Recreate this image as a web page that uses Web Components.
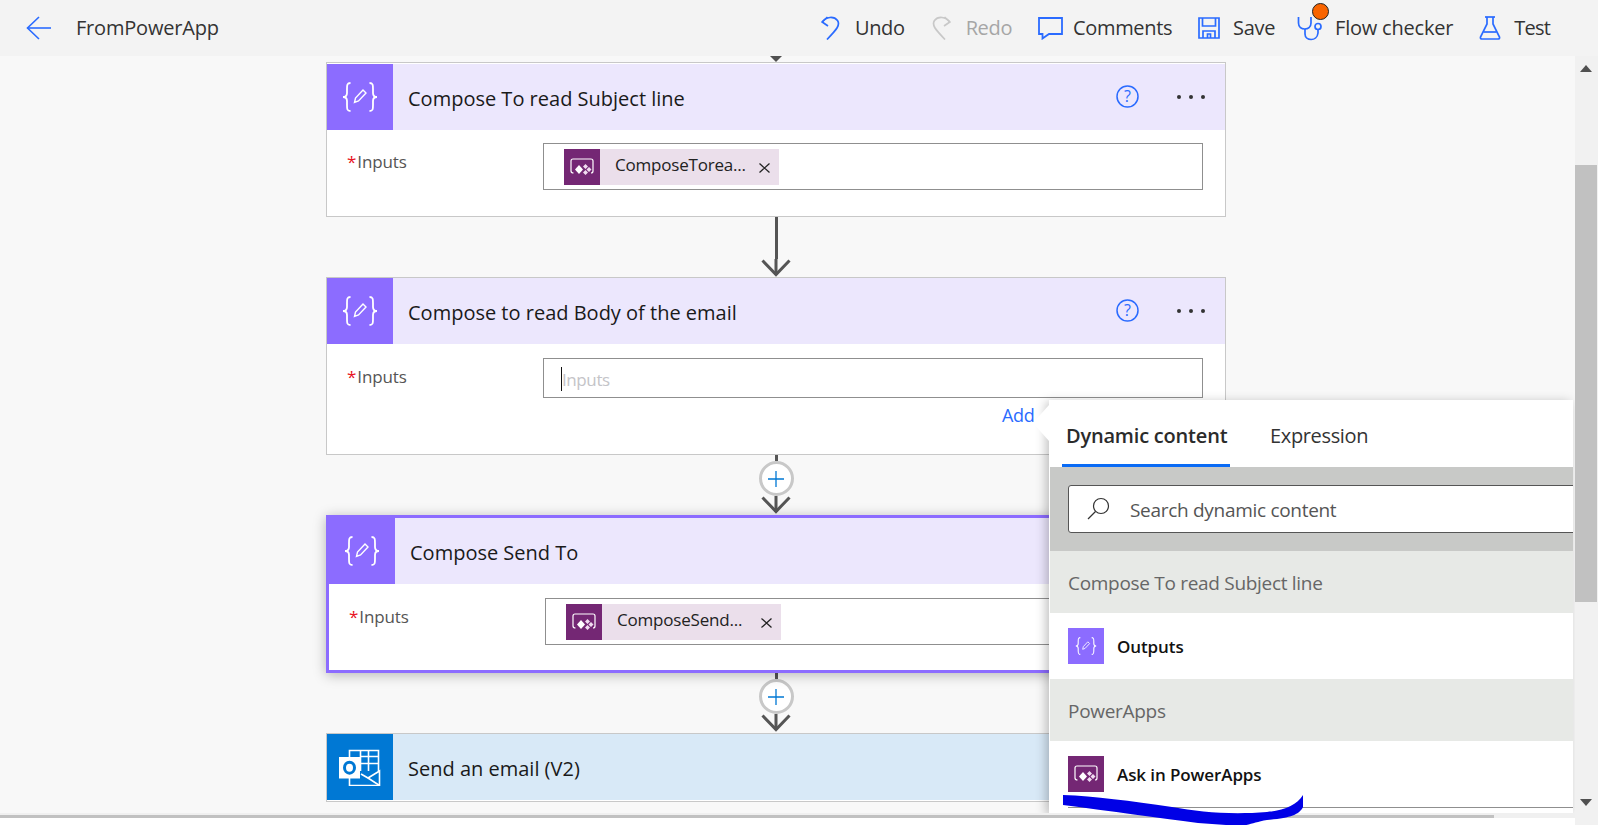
<!DOCTYPE html>
<html lang="en">
<head>
<meta charset="utf-8">
<title>FromPowerApp</title>
<style>
html, body { margin: 0; height: 100%; overflow: hidden; }
body { font-family: "Open Sans", "Noto Sans", sans-serif; color: #222; }
</style>
</head>
<body>
<flow-app>
	<tool-btn slot="tools" icon="undo" style="margin-right:27px">Undo</tool-btn>
	<tool-btn slot="tools" icon="redo" disabled style="margin-right:26px">Redo</tool-btn>
	<tool-btn slot="tools" icon="comment" style="margin-right:26px;--gap:10px">Comments</tool-btn>
	<tool-btn slot="tools" icon="save" style="margin-right:22px;--gap:13px">Save</tool-btn>
	<tool-btn slot="tools" icon="checker" style="margin-right:26px;--gap:11px;letter-spacing:-.2px">Flow checker</tool-btn>
	<tool-btn slot="tools" icon="test" style="--gap:13px;letter-spacing:-.8px">Test</tool-btn>

	<flow-link kind="head"></flow-link>
	<flow-card heading="Compose To read Subject line" style="height:155px;padding-top:1px">
		<flow-field><flow-token>ComposeTorea...</flow-token></flow-field>
	</flow-card>
	<flow-link kind="arrow"></flow-link>
	<flow-card heading="Compose to read Body of the email" style="height:178px">
		<flow-field tall placeholder="Inputs"></flow-field>
		<a style="position:absolute;left:675px;top:125px;color:#2a6bff;font-size:18px;letter-spacing:-.3px">Add</a>
	</flow-card>
	<flow-link kind="plus"></flow-link>
	<flow-card heading="Compose Send To" selected style="height:158px">
		<flow-field style="margin-top:1px"><flow-token>ComposeSend...</flow-token></flow-field>
	</flow-card>
	<flow-link kind="plus"></flow-link>
	<flow-card heading="Send an email (V2)" type="outlook" style="height:69px"></flow-card>

	<dyn-panel slot="overlay"></dyn-panel>
</flow-app>

<script>
const ICONS = {
	undo: `<svg width="19" height="24" viewBox="0 0 19 24" fill="none" stroke="currentColor" stroke-width="1.7"><path d="M6.500 1 L1.200 6 L7 10"/><path d="M1.200 6 C5 .5 13 0 16.500 4.500 C19.500 9 16 13 6 23.500"/></svg>`,
	redo: `<svg width="19" height="24" viewBox="0 0 19 24" fill="none" stroke="currentColor" stroke-width="1.7"><path d="M12.500 1 L17.800 6 L12 10"/><path d="M17.800 6 C14 .5 6 0 2.500 4.500 C-.5 9 3 13 13 23.500"/></svg>`,
	comment: `<svg width="25" height="23" viewBox="0 0 25 23" fill="none" stroke="currentColor" stroke-width="1.8"><path d="M1 1 H24 V17 H11 L4.500 21.500 V17 H1 Z"/></svg>`,
	save: `<svg width="22" height="22" viewBox="0 0 22 22" fill="none" stroke="currentColor" stroke-width="1.7"><path d="M1 1 H21 V21 H1 Z"/><path d="M4.500 1 V9 H17.500 V1"/><path d="M5 21 V14 H17 V21"/><path d="M9.500 21 V17 H12.500 V21"/></svg>`,
	checker: `<svg width="27" height="25" viewBox="0 0 27 25" fill="none" stroke="currentColor" stroke-width="1.7"><path d="M1.500 1 V7 C1.500 15 14 15 14 7 V1"/><path d="M8 13 V18 C8 25 20 26 21 17 V14"/><circle cx="21" cy="10.500" r="3"/></svg>`,
	test: `<svg width="22" height="24" viewBox="0 0 22 24" fill="none" stroke="currentColor" stroke-width="1.7"><path d="M6 1 H16"/><path d="M8 1 V8 L1.500 21 Q1 23 3 23 H19 Q21 23 20.500 21 L14 8 V1"/><path d="M4.500 16 H17.500"/></svg>`,
	compose: `<svg width="36" height="30" viewBox="0 0 36 30" fill="none" stroke="#fff" stroke-width="1.800"><path d="M8.500 1 C5 1 5 3 5 7 V11 C5 13 4 15 1 15 C4 15 5 17 5 19 V23 C5 27 5 29 8.500 29"/><path d="M27.500 1 C31 1 31 3 31 7 V11 C31 13 32 15 35 15 C32 15 31 17 31 19 V23 C31 27 31 29 27.500 29"/><path d="M12.500 20.500 L13.500 16 L21 8 L24 11 L16.500 19 Z" stroke-width="1.400"/></svg>`,
	powerapps: `<svg width="36" height="36" viewBox="0 0 36 36"><path d="M9.500 24 Q7 24 7 22 V12 Q7 10 9 10 H27 Q29 10 29 12 V22 Q29 24 27 24" fill="none" stroke="#fff" stroke-width="1.200"/><path d="M15 16 L19 20.500 L15 25 L11 20.500 Z" fill="#fff"/><path d="M21.500 15 L24 17.500 L21.500 20 L19 17.500 Z M21.500 21 L24 23.500 L21.500 26 L19 23.500 Z M25 18 L27.500 20.500 L25 23 L22.500 20.500 Z" fill="#f1dcf1"/></svg>`,
	outlook: `<svg width="43" height="37" viewBox="0 0 43 37" fill="none" stroke="#fff" stroke-width="1.600"><path d="M10.500 8 V1.500 H39.500 V22 M21.500 1.500 V22 M29.500 1.500 V22 M21.500 7.500 H39.500 M21.500 14.500 H39.500"/><path d="M10.500 29 V36.500 H40.500 V22 L29 29 L22 25"/><path d="M29 29 L40.500 36.500"/><path d="M0 8 H21 V29.500 H0 Z" fill="#fff" stroke="none"/><ellipse cx="10.500" cy="18.700" rx="5" ry="5.500" stroke="#0078d4" stroke-width="3"/></svg>`
};

function shadow(host, html) {
	host.attachShadow({mode: "open"}).innerHTML = html;
}

class FlowApp extends HTMLElement {
	constructor() {
		super();
		shadow(this, `
<style>
:host { display: grid; grid-template-columns: 1575px 23px; grid-template-rows: 56px 757px 12px; width: 1598px; height: 825px; position: relative; overflow: hidden; background: #f8f8f8; }
header { grid-column: 1 / 3; grid-row: 1; background: #f3f3f3; display: flex; align-items: center; }
.back { margin-left: 26px; color: #2a6bff; display: flex; }
h1 { margin: 0 0 0 24px; font: 400 20px/1 "Open Sans", sans-serif; color: #333; flex: 1; letter-spacing: -.2px; }
.tools { display: flex; align-items: center; margin-right: 48px; }
main { grid-column: 1; grid-row: 2; position: relative; padding-left: 326px; overflow: hidden; display: flex; flex-direction: column; }
.vbar { grid-column: 2; grid-row: 2 / 4; background: #f1f1f1; display: flex; flex-direction: column; align-items: center; padding-top: 9px; }
.thumb { position: absolute; top: 165px; right: 1px; width: 22px; height: 437px; background: #c1c1c1; }
.up, .down { width: 0; border: 6px solid transparent; border-top: 0; border-bottom: 7px solid #505050; margin-left: -1px; }
.down { margin-top: auto; margin-bottom: 19px; border-bottom: 0; border-top: 7px solid #505050; }
.hbar { grid-column: 1; grid-row: 3; background: linear-gradient(#f0f0f0 0 2px, #c1c1c1 2px 5px, #fff 5px); position: relative; }
.hbar::after { content: ""; position: absolute; left: 1494px; right: 0; top: 0; height: 5px; background: #f0f0f0; }
.scribble { position: absolute; left: 0; top: 0; pointer-events: none; }
</style>
<header>
	<span class="back"><svg width="26" height="24" viewBox="0 0 26 24" fill="none" stroke="currentColor" stroke-width="1.600"><path d="M13 1 L1.500 12 L13 23"/><path d="M1.500 12 H25"/></svg></span>
	<h1>FromPowerApp</h1>
	<div class="tools"><slot name="tools"></slot></div>
</header>
<main><slot></slot><slot name="overlay"></slot></main>
<div class="vbar"><span class="up"></span><span class="thumb"></span><span class="down"></span></div>
<div class="hbar"></div>
<svg class="scribble" width="1598" height="825"><path d="M1063 795 C1095 796 1130 801 1172 807 C1200 812 1230 815 1267 812 C1285 810 1297 805 1303 795 L1303 807 C1299 815 1290 818 1267 820 C1255 822 1250 825 1240 826 L1198 823 C1160 818 1110 811 1063 805 Z" fill="#0000e6"/></svg>`);
	}
}

class ToolBtn extends HTMLElement {
	constructor() {
		super();
		let disabled = this.hasAttribute("disabled");
		shadow(this, `
<style>
:host { display: inline-flex; align-items: center; gap: var(--gap, 15px); font: 400 20px/1 "Open Sans", sans-serif; letter-spacing: -.35px; color: ${disabled ? "#a6a6a6" : "#333"}; position: relative; }
.icon { color: ${disabled ? "#c8c8c8" : "#2a6bff"}; display: flex; }
.badge { position: absolute; left: 15px; top: -13px; width: 15px; height: 15px; border-radius: 50%; background: #f96400; border: 1px solid #222; }
</style>
<span class="icon">${ICONS[this.getAttribute("icon")]}</span>
${this.getAttribute("icon") == "checker" ? `<span class="badge"></span>` : ""}
<slot></slot>`);
	}
}

class FlowLink extends HTMLElement {
	constructor() {
		super();
		let kind = this.getAttribute("kind");
		let chevron = `<svg width="30" height="18" viewBox="0 0 30 18" fill="none" stroke="#555" stroke-width="3"><path d="M1.500 1.500 L15 15.500 L28.500 1.500"/><path d="M15 0 V16"/></svg>`;
		let body = "";
		if (kind == "head") {
			body = `<span class="tri"></span>`;
		} else if (kind == "arrow") {
			body = `<span class="line" style="height:42px"></span>${chevron}`;
		} else {
			body = `<span class="line" style="height:6px"></span>
			<span class="plus"><svg width="16" height="16" viewBox="0 0 16 16" stroke="#0078d4" stroke-width="1.300"><path d="M8 0 V16 M0 8 H16"/></svg></span>${chevron}`;
		}
		let height = {head: 6, arrow: 60, plus: 60}[kind];
		shadow(this, `
<style>
:host { display: flex; flex-direction: column; align-items: center; width: 900px; flex: none; height: ${height}px; }
.tri { border: 6px solid transparent; border-bottom: 0; border-top: 6px solid #505050; }
.line { width: 3px; background: #555; flex: none; }
.plus { width: 29px; height: 29px; border: 3px solid #c8c8c8; border-radius: 50%; background: #fff; display: flex; align-items: center; justify-content: center; flex: none; }
svg { display: block; flex: none; }
</style>
${body}`);
	}
}

class FlowCard extends HTMLElement {
	constructor() {
		super();
		let selected = this.hasAttribute("selected");
		let outlook = this.getAttribute("type") == "outlook";
		let heading = this.getAttribute("heading");
		shadow(this, `
<style>
:host { display: flex; flex-direction: column; width: 900px; box-sizing: border-box; flex: none; position: relative; background: #fff; border: ${selected ? "3px solid #8c6cff" : "1px solid #c8c8c8"}; ${selected ? "box-shadow: 0 2px 12px rgba(0,0,0,.28);" : ""} }
.head { display: flex; align-items: center; height: 66px; background: ${outlook ? "#d8e9f7" : "#ece7fd"}; flex: none; }
.icon { width: 66px; align-self: stretch; background: ${outlook ? "#0078d4" : "#8c6cff"}; display: flex; align-items: center; justify-content: center; flex: none; }
h2 { margin: 0 0 0 15px; padding-top: 4px; font: 400 20px/1 "Open Sans", sans-serif; color: #1a1a1a; flex: 1; }
.help { margin: -2px 38px 0 0; display: flex; }
.more { display: flex; gap: 8px; margin-right: 20px; }
.more i { width: 4px; height: 4px; border-radius: 50%; background: #333; }
.body { padding: 13px 22px 0 20px; }
</style>
<div class="head">
	<span class="icon">${outlook ? ICONS.outlook : ICONS.compose}</span>
	<h2>${heading}</h2>
	${outlook || selected ? "" : `<span class="help"><svg width="23" height="23" viewBox="0 0 23 23"><circle cx="11.500" cy="11.500" r="10.500" fill="none" stroke="#2a6bff" stroke-width="1.500"/><text x="11.500" y="17" text-anchor="middle" font-family="Open Sans" font-size="16" fill="#2a6bff">?</text></svg></span><span class="more"><i></i><i></i><i></i></span>`}
</div>
<div class="body"><slot></slot></div>`);
	}
}

class FlowField extends HTMLElement {
	constructor() {
		super();
		let placeholder = this.getAttribute("placeholder");
		let tall = this.hasAttribute("tall");
		shadow(this, `
<style>
:host { display: flex; align-items: flex-start; margin-top: ${tall ? 1 : 0}px; }
.label { width: 196px; flex: none; font: 400 17px/1 "Open Sans", sans-serif; color: #555; padding-top: 10px; letter-spacing: -.1px; display: flex; gap: 1px; }
.label b { font-weight: 400; color: #e81123; }
.box { width: 660px; height: ${tall ? 40 : 47}px; box-sizing: border-box; border: 1px solid #8f8f8f; display: flex; align-items: center; padding-left: ${tall ? 17 : 20}px; background: #fff; flex: none; }
.ph { font: 400 17px/1 "Open Sans", sans-serif; letter-spacing: -.4px; color: #c4c4c8; margin-top: 2px; border-left: 1px solid #111; padding: 3.500px 0; }
</style>
<span class="label"><b>*</b>Inputs</span>
<div class="box">${placeholder ? `<span class="ph">${placeholder}</span>` : `<slot></slot>`}</div>`);
	}
}

class FlowToken extends HTMLElement {
	constructor() {
		super();
		shadow(this, `
<style>
:host { display: inline-flex; align-items: center; height: 36px; width: 215px; background: #ebdfeb; font: 400 17px/1 "Open Sans", sans-serif; letter-spacing: -.2px; color: #222; }
.ic { width: 36px; height: 36px; background: #742774; flex: none; }
.tx { margin-left: 15px; flex: 1; white-space: nowrap; padding-bottom: 5px; }
.x { margin-right: 9px; margin-top: 2px; display: flex; }
</style>
<span class="ic">${ICONS.powerapps}</span>
<span class="tx"><slot></slot></span>
<span class="x"><svg width="11" height="10" viewBox="0 0 11 10" stroke="#222" stroke-width="1.300"><path d="M.500 .500 L10.500 9.500 M10.500 .500 L.500 9.500"/></svg></span>`);
	}
}

class DynPanel extends HTMLElement {
	constructor() {
		super();
		shadow(this, `
<style>
:host { position: absolute; left: 1049px; top: 344px; width: 524px; height: 413px; background: #fff; box-shadow: -3px 2px 10px rgba(0,0,0,.25); display: block; font-family: "Open Sans", sans-serif; }
.notch { position: absolute; left: -16px; top: 5px; width: 0; height: 0; border-style: solid; border-width: 18px 16px 18px 0; border-color: transparent #fff transparent transparent; }
.wrap { position: absolute; inset: 0; overflow: hidden; padding-left: 1px; display: flex; flex-direction: column; }
.tabs { display: flex; height: 67px; flex: none; padding-left: 12px; box-sizing: border-box; }
.tab { font-size: 20px; color: #333; letter-spacing: -.35px; padding: 22px 4px 0; box-sizing: border-box; height: 67px; white-space: nowrap; }
.tab.on { font-weight: 600; border-bottom: 3px solid #0a6bf5; color: #2b2b2b; width: 168px; margin-right: 36px; letter-spacing: -.2px; }
.search { background: #c8c9c7; height: 84px; flex: none; padding: 18px 0 0 18px; box-sizing: border-box; }
.input { width: 560px; height: 48px; box-sizing: border-box; border: 1px solid #555; border-radius: 3px; background: #fff; display: flex; align-items: center; padding-left: 18px; gap: 20px; font-size: 19px; color: #555; letter-spacing: -.3px; }
.input span { margin-top: 2px; }
.sec { background: #e7e9e6; height: 62px; display: flex; align-items: center; padding: 2px 0 0 18px; box-sizing: border-box; font-size: 19px; color: #666; flex: none; letter-spacing: -.3px; }
.row { height: 66px; display: flex; align-items: center; padding-left: 18px; gap: 13px; font-size: 17px; font-weight: 600; color: #111; flex: none; letter-spacing: -.1px; }
.chip { width: 36px; height: 36px; display: flex; align-items: center; justify-content: center; flex: none; }
.rule { margin: auto 0 5px 18px; border-top: 1px solid #8f8f8f; }
</style>
<span class="notch"></span>
<div class="wrap">
	<div class="tabs"><span class="tab on">Dynamic content</span><span class="tab">Expression</span></div>
	<div class="search"><div class="input"><svg width="23" height="24" viewBox="0 0 23 24" fill="none" stroke="#333" stroke-width="1.200"><circle cx="14" cy="9" r="7.500"/><path d="M8.500 14.500 L1 22"/></svg><span>Search dynamic content</span></div></div>
	<div class="sec">Compose To read Subject line</div>
	<div class="row"><span class="chip" style="background:#8c6cff">${ICONS.compose.replace('width="36" height="30"', 'width="22" height="18"')}</span>Outputs</div>
	<div class="sec">PowerApps</div>
	<div class="row"><span class="chip" style="background:#742774">${ICONS.powerapps}</span>Ask in PowerApps</div>
	<div class="rule"></div>
</div>`);
	}
}

customElements.define("flow-app", FlowApp);
customElements.define("tool-btn", ToolBtn);
customElements.define("flow-link", FlowLink);
customElements.define("flow-card", FlowCard);
customElements.define("flow-field", FlowField);
customElements.define("flow-token", FlowToken);
customElements.define("dyn-panel", DynPanel);
</script>
</body>
</html>
